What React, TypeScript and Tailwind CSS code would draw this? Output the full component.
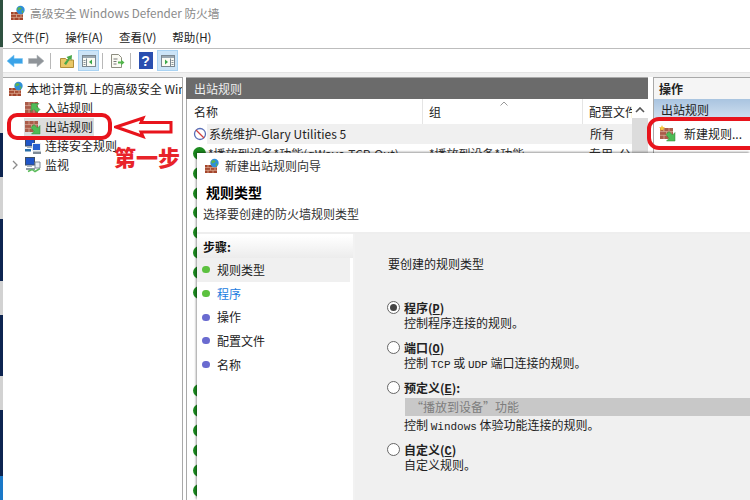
import React from "react";

const sans = "font-['Noto_Sans_CJK_SC','Noto_Sans',sans-serif]";

const WallIcon = () => (
  <svg viewBox="0 0 16 16" width="16" height="16" className="shrink-0">
    <rect x="1" y="7" width="12" height="8" fill="#a4452c" />
    <path d="M1 9.600h12M1 12.300h12M4 7v2.600M9 7v2.600M6.500 9.600v2.700M11 9.600v2.700M4 12.300V15M9 12.300V15" stroke="#e2b9a0" strokeWidth="0.7" />
    <circle cx="10.500" cy="5" r="4.200" fill="#2f8fd8" />
    <path d="M8 2.600c1.300-.8 2.800-.5 3.400.4.400.8-.5 1.600-1.500 1.500-.6 0-.7 1-1.600 1-.9-.1-1.300-1.900-.3-2.900zM12.800 5.400c.6.2.7 1.400.1 2.300-.6.500-1.200 0-1.200-.8 0-.7.500-1.700 1.100-1.500z" fill="#5fb548" />
  </svg>
);

const RuleIcon = ({ dir, star = false }: { dir: "in" | "out"; star?: boolean }) => (
  <svg viewBox="0 0 18 18" width="18" height="18" className="shrink-0">
    <rect x="1" y="3" width="13" height="11" fill="#ab5c4a" />
    <path d="M1 6.600h13M1 10.300h13M5 3v3.600M10 3v3.600M7.500 6.600v3.700M12 6.600v3.700M5 10.300V14M10 10.300V14" stroke="#dcb3a2" strokeWidth="0.7" />
    {dir === "in" ? (
      <path d="M7.500 4.500h7.500l-2.500 2.500 3.500 3.500-3 3-3.500-3.500-2.500 2.500z" fill="#4fbb55" stroke="#2f8a3a" strokeWidth="0.5" />
    ) : (
      <path d="M5.500 8l3-3 3.500 3.500 2.500-2.500v8.500H6l2.500-2.500z" fill="#4fbb55" stroke="#2f8a3a" strokeWidth="0.5" transform="translate(1.500 1.500)" />
    )}
    {star && <path d="M3 0l.9 2 2.100.3-1.600 1.400.5 2.100L3 4.700 1.100 5.800l.5-2.100L0 2.300 2.100 2z" fill="#f3c73f" />}
  </svg>
);

const ComputerIcon = ({ pair = false }: { pair?: boolean }) => (
  <svg viewBox="0 0 18 18" width="18" height="18" className="shrink-0">
    <rect x="1.500" y="1.500" width="9" height="7.500" fill="#1f55c8" stroke="#3e4f66" />
    <path d="M3 9.500h5v1.500H3z" fill="#a7b2bd" />
    {pair ? (
      <>
        <rect x="8.500" y="6.500" width="8" height="7" fill="#2a62d0" stroke="#e9eef3" />
        <path d="M9 14.500h8V17H9z" fill="#7e8a96" />
        <path d="M1 12h6v2.500H1z" fill="#2b6fa8" />
      </>
    ) : (
      <>
        <path d="M2 12h9v2H2z" fill="#8c98a4" />
        <path d="M4 15.500l4-2 3 2 5-3" fill="none" stroke="#5bbb5b" strokeWidth="1.500" />
        <path d="M11 6h5v6h-5z" fill="#e9eef3" stroke="#7e8a96" />
      </>
    )}
  </svg>
);

const ToolBtn = ({ active = false, children }: { active?: boolean; children: React.ReactNode }) => (
  <span className={`flex h-[21px] w-[21px] items-center justify-center border ${active ? "border-[#a9d3f3] bg-[#cce4f7]" : "border-transparent"}`}>
    {children}
  </span>
);

const PanelGlyph = ({ right = false }: { right?: boolean }) => (
  <svg viewBox="0 0 16 16" width="16" height="16">
    <rect x="1.500" y="2.500" width="13" height="11" fill="#fbfbf4" stroke="#7b8790" />
    <path d="M2 3h12v2H2z" fill="#9aa8b2" />
    {right ? (
      <>
        <path d="M10.500 5.500v8" stroke="#7b8790" />
        <path d="M11.500 7.500h2M11.500 9.500h2M11.500 11.500h2" stroke="#8a949c" />
        <path d="M5 6.500v5l3-2.500z" fill="#3aa84a" />
      </>
    ) : (
      <>
        <path d="M5.500 5.500v8" stroke="#7b8790" />
        <path d="M2.500 7.500h2M2.500 9.500h2M2.500 11.500h2" stroke="#8a949c" />
        <path d="M11 6.500v5l-3-2.500z" fill="#3aa84a" />
      </>
    )}
  </svg>
);

const Toolbar = () => (
  <div className="flex h-[24px] items-center gap-[1px] border-b border-[#e4e4e4] pl-[3px]">
    <svg viewBox="0 0 18 14" width="18" height="14" className="mr-[2px]">
      <path d="M8 1 1 7l7 6V9.500h8.500v-5H8z" fill="#3aa3e8" stroke="#7fc7f2" strokeWidth="0.6" />
    </svg>
    <svg viewBox="0 0 18 14" width="18" height="14">
      <path d="M10 1l7 6-7 6V9.500H1.500v-5H10z" fill="#8f9499" stroke="#b4b8bc" strokeWidth="0.6" />
    </svg>
    <span className="mx-[4px] h-[16px] w-px bg-[#b8b8b8]" />
    <ToolBtn>
      <svg viewBox="0 0 16 16" width="16" height="16">
        <path d="M1.500 5.500h5l1.500 1.500h6.500v7.500h-13z" fill="#e9c868" stroke="#b18f3a" />
        <path d="M5 10.500 9 5.500 7.500 4 13 2l-.5 5.500L11 6l-4 6z" fill="#49a84a" />
      </svg>
    </ToolBtn>
    <ToolBtn active>
      <PanelGlyph />
    </ToolBtn>
    <span className="mx-[2px] h-[16px] w-px bg-[#b8b8b8]" />
    <ToolBtn>
      <svg viewBox="0 0 16 16" width="16" height="16">
        <path d="M2.500 1.500h7l3 3v10h-10z" fill="#fbfbf4" stroke="#8d8d80" />
        <path d="M4.500 6h4M4.500 8.500h3M4.500 11h3" stroke="#777" />
        <path d="M9 8.500h3V6.500l3.500 3-3.500 3v-2H9z" fill="#52b54c" />
      </svg>
    </ToolBtn>
    <span className="ml-[2px] mr-[3px] h-[16px] w-px bg-[#b8b8b8]" />
    <ToolBtn>
      <span className="flex h-[17px] w-[14px] items-center justify-center bg-[#2a4fb0] font-['Liberation_Sans',sans-serif] text-[14px] font-bold leading-none text-white">?</span>
    </ToolBtn>
    <ToolBtn active>
      <PanelGlyph right />
    </ToolBtn>
  </div>
);

const TreeRow = ({ icon, label, selected = false, chevron = false }: { icon: React.ReactNode; label: string; selected?: boolean; chevron?: boolean }) => (
  <div className="flex h-[19px] items-center pl-[9px]">
    <span className="flex w-[12px] shrink-0 items-center">
      {chevron && (
        <svg viewBox="0 0 6 10" width="6" height="10">
          <path d="M1 1l4 4-4 4" fill="none" stroke="#8c8c8c" strokeWidth="1.300" />
        </svg>
      )}
    </span>
    <span className={`flex h-[18px] items-center gap-[2px] ${selected ? "bg-[#dddddd]" : ""}`}>
      {icon}
      <span className="px-[1px] text-[12px] leading-[18px] text-[#222]">{label}</span>
    </span>
  </div>
);

const OptionRow = ({ label, hotkey, tail = "", desc, checked = false, children }: { label: string; hotkey: string; tail?: string; desc: React.ReactNode; checked?: boolean; children?: React.ReactNode }) => (
  <div className="-ml-[1px] flex">
    <span className="mt-[1px] flex h-[13px] w-[13px] shrink-0 items-center justify-center rounded-full border border-[#666] bg-white">
      {checked && <span className="h-[7px] w-[7px] rounded-full bg-[#444]" />}
    </span>
    <div className="ml-[4px] flex-1 text-[12px] text-[#222]">
      <div className="h-[15px] font-bold leading-[15px]">
        {label}(<span className="font-['Liberation_Mono',monospace] underline">{hotkey}</span>){tail}
      </div>
      {children}
      <div className="h-[15px] leading-[15px]">{desc}</div>
    </div>
  </div>
);

const Mono = ({ children }: { children: React.ReactNode }) => (
  <span className="font-['Liberation_Mono',monospace] text-[11px]">{children}</span>
);

const Step = ({ label, color, link = false, selected = false }: { label: string; color: string; link?: boolean; selected?: boolean }) => (
  <div className={`flex h-[23.700px] items-center pl-[5px] ${selected ? "mr-[3px] bg-[#f0f0f0]" : ""}`}>
    <span className={`h-[7px] w-[8px] rounded-full ${color}`} />
    <span className={`ml-[7px] text-[12px] ${link ? "text-[#1b7ce0]" : "text-[#222]"}`}>{label}</span>
  </div>
);

const Wizard = () => (
  <div className={`absolute left-[197px] top-[153px] flex h-[347px] w-[553px] flex-col bg-white shadow-[-1px_-1px_2px_rgba(0,0,0,0.4)] ${sans}`}>
    <div className="flex h-[24px] items-center pl-[7px] pt-[2px]">
      <WallIcon />
      <span className="ml-[5px] text-[12px] text-[#333]">新建出站规则向导</span>
    </div>
    <div className="h-[57px] border-b-2 border-[#eeeeee] pl-[6px] pt-[5px]">
      <div className="pl-[3px] text-[14px] font-bold leading-[20px] text-black">规则类型</div>
      <div className="mt-[3px] text-[12px] leading-[18px] text-[#333]">选择要创建的防火墙规则类型</div>
    </div>
    <div className="flex flex-1">
      <div className="w-[158px] border-r-2 border-[#f2f2f2] pt-[2px]">
        <div className="flex h-[22px] items-center bg-gradient-to-b from-white to-[#ececec] pl-[6px] text-[12px] font-bold text-[#111]">步骤:</div>
        <Step label="规则类型" color="bg-[#5cc13f]" selected />
        <Step label="程序" color="bg-[#5cc13f]" link />
        <Step label="操作" color="bg-[#6a6bd0]" />
        <Step label="配置文件" color="bg-[#6a6bd0]" />
        <Step label="名称" color="bg-[#6a6bd0]" />
      </div>
      <div className="flex-1 bg-[#f0f0f0] pl-[33px] pt-[22px]">
        <div className="h-[16px] text-[12px] leading-[16px] text-[#222]">要创建的规则类型</div>
        <div className="mt-[28px] flex flex-col gap-[10px]">
          <OptionRow label="程序" hotkey="P" checked desc="控制程序连接的规则。" />
          <OptionRow label="端口" hotkey="O" desc={<>控制 <Mono>TCP</Mono> 或 <Mono>UDP</Mono> 端口连接的规则。</>} />
          <OptionRow
            label="预定义"
            hotkey="E"
            tail=":"
            desc={<>控制 <Mono>Windows</Mono> 体验功能连接的规则。</>}
          >
            <div className="mb-[1px] ml-[1px] mt-[3px] flex h-[18px] items-center bg-[#c8c8c8] pl-[6px] text-[#7d7d7d]">“播放到设备”功能</div>
          </OptionRow>
          <OptionRow label="自定义" hotkey="C" desc="自定义规则。" />
        </div>
      </div>
    </div>
  </div>
);

const Annotations = () => (
  <>
    <div className="absolute left-[7px] top-[113px] h-[27px] w-[105px] rounded-[10px] border-[4px] border-[#e8141c]" />
    <svg viewBox="0 0 60 24" width="60" height="24" className="absolute left-[114px] top-[115px]">
      <path d="M2 12 29 3 27 7.500H57V17H27l2 4.500z" fill="none" stroke="#e8141c" strokeWidth="3" />
    </svg>
    <div className={`absolute left-[114px] top-[142px] text-[22px] font-black leading-[28px] text-[#e8242a] ${sans}`}>第一步</div>
    <div className="absolute left-[647px] top-[117px] h-[33px] w-[120px] rounded-l-[12px] border-[4px] border-[#e8141c]" />
  </>
);

export default function App() {
  const shields = [153, 173, 193, 212, 232, 252, 272, 292, 390, 410, 430, 450, 470, 490];
  return (
    <div className={`relative flex h-[500px] w-[750px] overflow-hidden bg-white ${sans}`}>
      {/* desktop showing behind the window */}
      <div className="flex w-[3px] shrink-0 flex-col">
        <div className="h-[47px] bg-[#2f5140]" />
        <div className="h-[86px] bg-[#d2d2d2]" />
        <div className="h-[44px] bg-[#0d2450]" />
        <div className="h-[42px] bg-[#d2d2d2]" />
        <div className="h-[62px] bg-[#0d2450]" />
        <div className="h-[34px] bg-[#d2d2d2]" />
        <div className="h-[61px] bg-[#0d2450]" />
        <div className="h-[34px] bg-[#d2d2d2]" />
        <div className="h-[66px] bg-[#0d2450]" />
        <div className="flex-1 bg-[#1a78c8]" />
      </div>

      <div className="flex min-w-0 flex-1 flex-col">
        <div className="flex h-[26px] items-center pl-[7px]">
          <WallIcon />
          <span className="ml-[4px] text-[11.700px] text-[#8a8a8a]">高级安全 Windows Defender 防火墙</span>
        </div>
        <div className="flex h-[23px] items-center gap-[16px] border-b border-[#bdbdbd] pl-[9px] pt-[1px] text-[11.500px] text-[#222]">
          <span>文件(F)</span>
          <span>操作(A)</span>
          <span>查看(V)</span>
          <span>帮助(H)</span>
        </div>
        <Toolbar />
        <div className="flex h-[4px] bg-[#f0f0f0]" />

        <div className="flex flex-1">
          <div className="w-[180px] shrink-0 border-r border-t border-[#a9a9a9] pt-[1px]">
            <div className="flex h-[19px] items-center overflow-hidden whitespace-nowrap pl-[5px]">
              <WallIcon />
              <span className="ml-[3px] text-[12px] text-[#222]">本地计算机 上的高级安全 Windows</span>
            </div>
            <TreeRow icon={<RuleIcon dir="in" />} label="入站规则" />
            <TreeRow icon={<RuleIcon dir="out" />} label="出站规则" selected />
            <TreeRow icon={<ComputerIcon pair />} label="连接安全规则" />
            <TreeRow icon={<ComputerIcon />} label="监视" chevron />
          </div>

          <div className="ml-[3px] flex w-[462px] shrink-0 flex-col border-t border-[#a9a9a9]">
            <div className="flex h-[21px] items-center bg-[#6b6b6b] pl-[8px] text-[12px] text-[#eeeeee]">出站规则</div>
            <div className="relative flex-1 border-l border-[#a9a9a9]">
              <div className="flex h-[25px] items-center text-[12px] text-[#222]">
                <span className="h-full w-[236px] border-r border-[#e5e5e5] pl-[7px] leading-[25px]">名称</span>
                <span className="relative h-full w-[160px] border-r border-[#e5e5e5] pl-[6px] leading-[25px]">
                  组
                  <svg viewBox="0 0 8 5" width="8" height="5" className="absolute left-[77px] top-[2px]">
                    <path d="M.5 4.500 4 1l3.500 3.500" fill="none" stroke="#999" />
                  </svg>
                </span>
                <span className="w-[49px] overflow-hidden whitespace-nowrap pl-[6px]">配置文件</span>
              </div>
              <div className="flex h-[20px] items-center text-[12px] text-[#222]">
                <svg viewBox="0 0 14 14" width="14" height="14" className="ml-[6px] shrink-0">
                  <circle cx="7" cy="7" r="5.500" fill="#fff" stroke="#5a6fb8" strokeWidth="1.300" />
                  <path d="M3 3l8 8" stroke="#d04040" strokeWidth="1.300" />
                </svg>
                <span className="flex h-full flex-1 items-center bg-[#f0f0f0] pl-[2px]">
                  <span className="w-[381px]">系统维护-Glary Utilities 5</span>
                  <span>所有</span>
                </span>
              </div>
              <div className="flex h-[20px] items-center overflow-hidden whitespace-nowrap text-[12px] text-[#333]">
                <span className="ml-[21px] w-[215px]">*播放到设备*功能(qWave-TCP-Out)</span>
                <span className="ml-[6px] w-[160px]">*播放到设备*功能</span>
                <span>专用, 公</span>
              </div>
              <div className="absolute right-0 top-[2px] flex h-[52px] w-[16px] flex-col items-center bg-[#dcdcdc]">
                <div className="flex h-[17px] w-full items-center justify-center bg-white">
                  <svg viewBox="0 0 10 6" width="10" height="6">
                    <path d="M1 5l4-4 4 4" fill="none" stroke="#555" strokeWidth="1.600" />
                  </svg>
                </div>
              </div>
            </div>
          </div>

          <div className="ml-[5px] flex flex-1 flex-col border-l border-t border-[#a9a9a9]">
            <div className="flex h-[21px] items-center bg-[#f5f5f5] pl-[5px] text-[12px] font-bold text-[#222]">操作</div>
            <div className="flex h-[22px] items-center bg-gradient-to-b from-[#a9c4e0] to-[#d5e3f1] pl-[7px] text-[12px] text-[#222]">出站规则</div>
            <div className="flex h-[26px] items-center pl-[5px] text-[12px] text-[#222]">
              <RuleIcon dir="out" star />
              <span className="ml-[7px]">新建规则...</span>
            </div>
          </div>
        </div>
      </div>

      {/* firewall rule icons peeking out beside the wizard */}
      {shields.map((y) => (
        <span key={y} className="absolute left-[193px] h-[13px] w-[13px] rounded-full bg-[#1c8a1f]" style={{ top: y - 6 }} />
      ))}
      <Wizard />
      <Annotations />
    </div>
  );
}
